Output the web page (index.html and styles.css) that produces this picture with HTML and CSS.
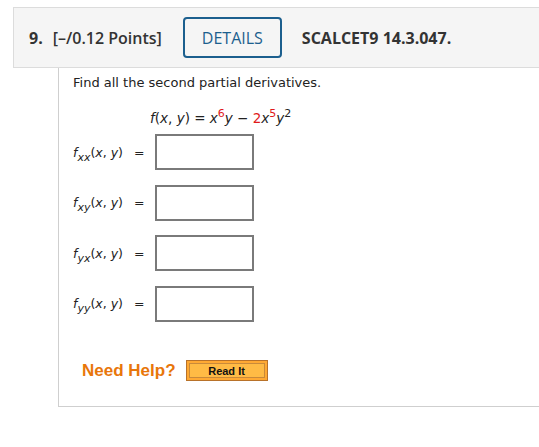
FILE: index.html
```html
<!DOCTYPE html>
<html>
<head>
<meta charset="utf-8">
<link rel="stylesheet" href="styles.css">
</head>
<body>
<div class="header">
  <span class="qnum">9.</span>
  <span class="points">[–/0.12 Points]</span>
  <span class="details">DETAILS</span>
  <span class="code">SCALCET9 14.3.047.</span>
</div>
<div class="content">
  <p class="prompt">Find all the second partial derivatives.</p>
  <div class="formula"><i>f</i>(<i>x</i>, <i>y</i>) = <i>x</i><sup class="red">6</sup><i>y</i> − <span class="red">2</span><i>x</i><sup class="red">5</sup><i>y</i><sup>2</sup></div>
  <div class="rows">
    <div class="row"><span class="label"><i>f</i><sub><i>xx</i></sub>(<i>x</i>, <i>y</i>)</span><span class="eq">=</span><span class="box"></span></div>
    <div class="row"><span class="label"><i>f</i><sub><i>xy</i></sub>(<i>x</i>, <i>y</i>)</span><span class="eq">=</span><span class="box"></span></div>
    <div class="row"><span class="label"><i>f</i><sub><i>yx</i></sub>(<i>x</i>, <i>y</i>)</span><span class="eq">=</span><span class="box"></span></div>
    <div class="row"><span class="label"><i>f</i><sub><i>yy</i></sub>(<i>x</i>, <i>y</i>)</span><span class="eq">=</span><span class="box"></span></div>
  </div>
  <div class="help">
    <span class="need">Need Help?</span>
    <span class="readit"><span class="readit-inner">Read It</span></span>
  </div>
</div>
</body>
</html>
```
FILE: styles.css
```css
html, body { margin: 0; padding: 0; background: #fff; }
body { width: 539px; overflow: hidden; }
.header {
  margin: 7px -10px 0 13px;
  height: 59px;
  background: #f5f5f5;
  border: 1px solid #dcdcdc;
  display: flex;
  align-items: center;
  font-family: "Open Sans", sans-serif;
  font-size: 16px;
  color: #333;
  padding-left: 15px;
}
.qnum { font-weight: 700; margin-right: 10px; }
.points { font-weight: 600; margin-right: 21px; }
.details {
  box-sizing: border-box;
  width: 99px; height: 41px;
  border: 2px solid #1c5f8e;
  border-radius: 4px;
  color: #1c5f8e;
  display: flex; align-items: center; justify-content: center;
  margin-right: 20px;
}
.code { font-weight: 700; }
.content {
  margin: 0 -10px 0 58px;
  border-left: 1px solid #cfcfcf;
  border-bottom: 1px solid #cfcfcf;
  height: 338px;
  padding-left: 14px;
  font-family: "DejaVu Sans", Verdana, sans-serif;
  font-size: 13px;
  color: #222;
}
.prompt { margin: 0; padding-top: 7px; line-height: 16px; font-size: 13px; }
.formula { padding-left: 77px; margin-top: 19px; line-height: 16px; font-size: 13.5px; }
.formula sup { font-size: 11px; vertical-align: 6px; line-height: 0; }
.red { color: #e0191b; }
.rows { margin-top: 1px; }
.row { display: flex; align-items: center; height: 50.5px; }
.label { width: 61px; font-size: 12.5px; }
.label sub { font-size: 11px; vertical-align: -4px; line-height: 0; }
.eq { width: 21px; font-size: 12.5px; }
.box { box-sizing: border-box; width: 99px; height: 36px; border: 2px solid #7a7a7a; }
.help { display: flex; align-items: center; margin-top: 31px; padding-left: 9px; }
.need { font-family: "Liberation Sans", Arial, sans-serif; font-weight: 700; font-size: 17px; color: #e8760a; margin-right: 10px; }
.readit {
  box-sizing: border-box; width: 82px; height: 21px;
  border: 1px solid #b8722a; background: #ffa933; padding: 2px;
  display: flex;
}
.readit-inner {
  flex: 1; border: 1px solid #c98a3a; background: #ffbb45;
  font-family: "Liberation Sans", Arial, sans-serif; font-weight: 700; font-size: 11px; color: #111;
  display: flex; align-items: center; justify-content: center;
}
```
